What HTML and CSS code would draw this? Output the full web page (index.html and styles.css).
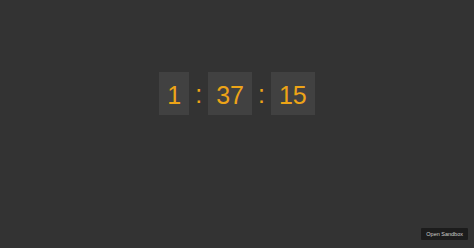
FILE: index.html
```html
<!DOCTYPE html>
<html>
<head>
<meta charset="utf-8">
<link rel="stylesheet" href="styles.css">
</head>
<body>
<div class="clock">
  <div class="unit">1</div>
  <div class="sep">:</div>
  <div class="unit">37</div>
  <div class="sep">:</div>
  <div class="unit">15</div>
</div>
<a class="open-sandbox">Open Sandbox</a>
</body>
</html>
```
FILE: styles.css
```css
html, body {
  margin: 0;
  height: 100%;
}
body {
  background: #333333;
  font-family: "Liberation Sans", Arial, sans-serif;
  position: relative;
  overflow: hidden;
}
.clock {
  display: flex;
  justify-content: center;
  align-items: center;
  padding-top: 72px;
  color: #eda417;
  font-size: 25px;
  line-height: 27px;
}
.unit {
  background: #414141;
  padding: 10px 8px 6px;
}
.sep {
  padding: 2px 6px 0;
}
.open-sandbox {
  position: absolute;
  right: 6px;
  bottom: 8px;
  background: #1c1c1c;
  color: #cfcfcf;
  font-size: 5.5px;
  line-height: 6px;
  padding: 3px 5px;
  border-radius: 1px;
}
```
